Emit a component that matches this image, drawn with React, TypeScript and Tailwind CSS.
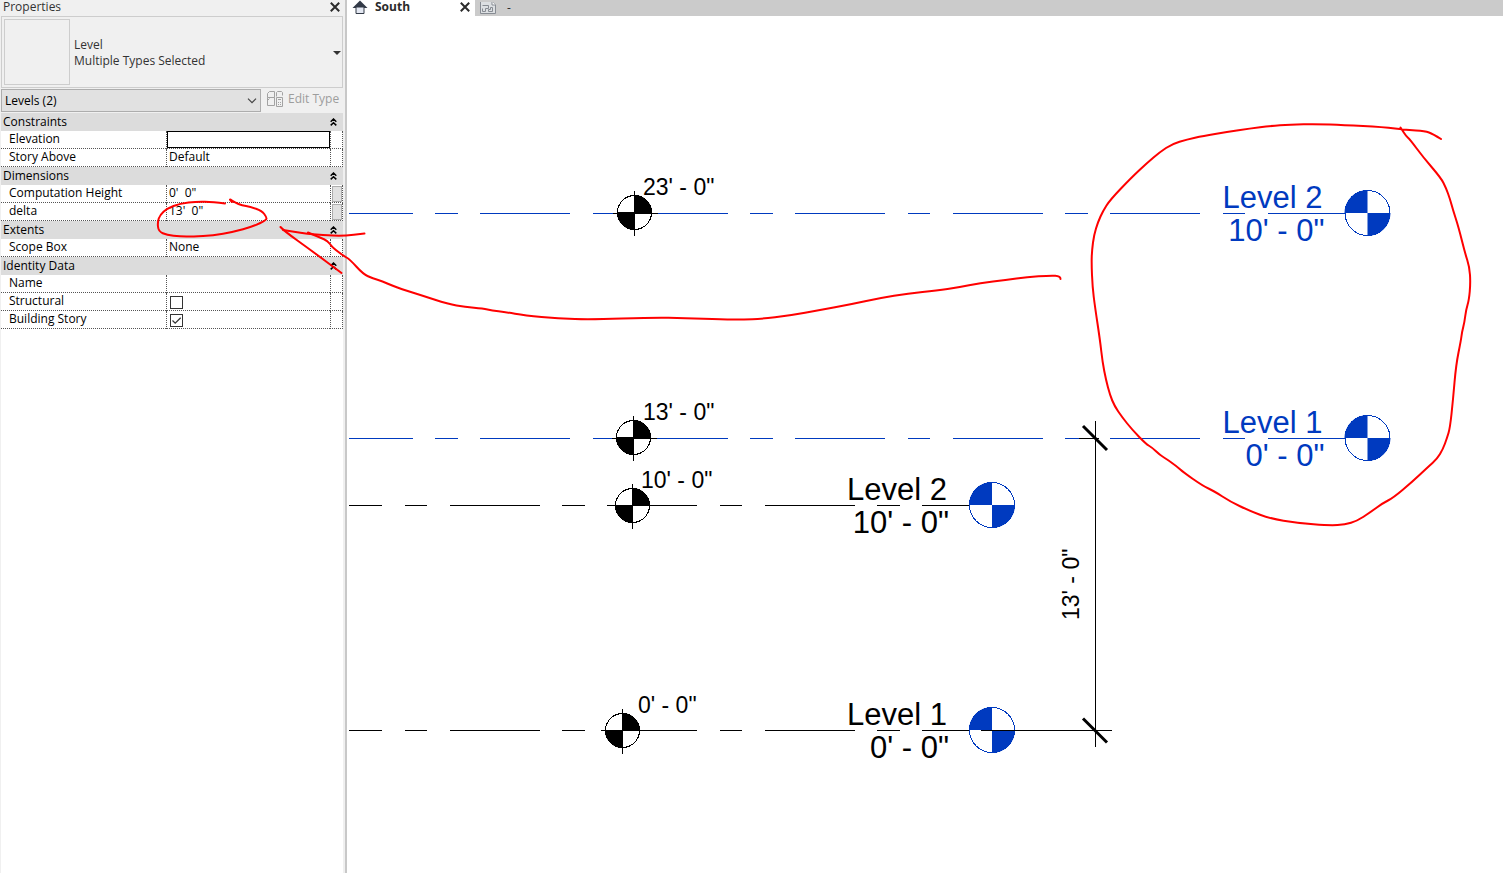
import { useState } from "react";

type Row = {
  id: string;
  label: string;
  kind: "text" | "box" | "check";
  value?: string;
  checked?: boolean;
  browse?: boolean;
};

const groups: { title: string; rows: Row[] }[] = [
  {
    title: "Constraints",
    rows: [
      { id: "elevation", label: "Elevation", kind: "box" },
      { id: "story-above", label: "Story Above", kind: "text", value: "Default" },
    ],
  },
  {
    title: "Dimensions",
    rows: [
      { id: "computation-height", label: "Computation Height", kind: "text", value: "0'  0\"", browse: true },
      { id: "delta", label: "delta", kind: "text", value: "13'  0\"", browse: true },
    ],
  },
  {
    title: "Extents",
    rows: [{ id: "scope-box", label: "Scope Box", kind: "text", value: "None" }],
  },
  {
    title: "Identity Data",
    rows: [
      { id: "name", label: "Name", kind: "text", value: "" },
      { id: "structural", label: "Structural", kind: "check", checked: false },
      { id: "building-story", label: "Building Story", kind: "check", checked: true },
    ],
  },
];

const BLUE = "#003abf";

const CloseIcon = () => (
  <svg width="10" height="10" viewBox="0 0 10 10" stroke="#2b2b2b" strokeWidth="2" fill="none">
    <path d="M0.8 0.8 9.2 9.2M9.2 0.8 0.8 9.2" />
  </svg>
);

const HomeIcon = () => (
  <svg width="16" height="14" viewBox="0 0 16 14">
    <path d="M0.5 8 8 0.500l7.500 7.500z" fill="#323a47" />
    <path d="M4 7h8V13.500H4z" fill="#e4e8f2" stroke="#323a47" />
  </svg>
);

const SheetIcon = () => (
  <svg width="16" height="12" viewBox="0 0 16 12" fill="none" stroke="#868b92">
    <path d="M0.500 -0.500H12L15.500 3V11.500H0.500z" fill="#dcdfe2" />
    <path d="M12 -0.500V3h3.500" fill="#fff" />
    <path d="M2.500 3.500H8.500V6.500H5.500V9.500H2.500V6.500M8.500 9.500V7.500H10.500V5.500H12.500V9.500z" />
  </svg>
);

const EditTypeIcon = () => (
  <svg width="17" height="17" viewBox="0 0 17 17" fill="none" stroke="#a2a2a2">
    <path d="M0.500 3.500 2.500 1.500H7.500V7.500H0.500zM0.500 10.500 2.500 8.500M0.500 7.500V15.500H7.500V7.500M9.500 6.500V2.500L10.500 1.500H14.500L15.500 2.500V5.500" />
    <path d="M9.500 7.500H15.500V16.500H9.500z" fill="#f0f0f0" />
    <path d="M11 9.500H14M11 12.500H12M13 12.500H14M11 14.500H12M13 14.500H14" />
  </svg>
);

const Chevrons = () => (
  <svg width="7" height="8" viewBox="0 0 7 8" fill="none" stroke="#000" strokeWidth="1.5">
    <path d="M0.700 3.700 3.500 1 6.300 3.700M0.700 7.400 3.500 4.700 6.300 7.400" />
  </svg>
);

const PropertyValue = ({ row }: { row: Row }) => {
  const [checked, setChecked] = useState(!!row.checked);

  if (row.kind === "check") {
    return (
      <span className="grid h-4 w-4 grid-cols-1 items-end pl-[3px]">
        <input
          id={row.id}
          type="checkbox"
          checked={checked}
          onChange={() => setChecked(!checked)}
          className="col-start-1 row-start-1 block size-[13px] appearance-none border border-[#333] bg-white"
        />
        {checked && (
          <svg width="13" height="13" viewBox="0 0 13 13" className="pointer-events-none col-start-1 row-start-1">
            <path d="M2.500 6.500 5.200 9.200 10.700 3.700" fill="none" stroke="#333" strokeWidth="1.300" />
          </svg>
        )}
      </span>
    );
  }
  if (row.kind === "box") {
    return <input id={row.id} type="text" className="block h-[17px] w-full border border-black bg-white px-0.5" />;
  }
  return (
    <input id={row.id} type="text" defaultValue={row.value} className="block h-[17px] w-full bg-white px-0.5 pb-0.5 whitespace-pre" />
  );
};

const PropertiesPanel = () => (
  <aside className="flex w-[347px] shrink-0 flex-col border-r-2 border-[#c8c8c8] bg-[#f0f0f0] pr-0.5 pl-px font-['Segoe_UI','Open_Sans',sans-serif] text-xs text-black">
    <header className="flex h-4 items-center justify-between pr-[3px] pb-0.5 pl-0.5">
      <h1 className="leading-[14px] text-[#333]">Properties</h1>
      <button type="button" aria-label="Close properties">
        <CloseIcon />
      </button>
    </header>

    <button type="button" className="flex h-[72px] items-center border border-[#cdcdcd] pr-px pl-0.5 text-left text-[#333]">
      <span className="size-[66px] border border-[#cdcdcd]" />
      <span className="flex-1 pt-0.5 pl-1 leading-4">
        Level
        <br />
        Multiple Types Selected
      </span>
      <svg width="8" height="4" viewBox="0 0 8 4" className="mt-0.5">
        <path d="M0 0h8L4 4z" fill="#333" />
      </svg>
    </button>

    <div className="flex h-[25px] items-center">
      <div className="grid w-[260px] items-center">
        <select
          aria-label="Filter"
          className="col-start-1 row-start-1 h-[23px] appearance-none border border-[#adadad] bg-[#e1e1e1] pl-[3px]"
        >
          <option>Levels (2)</option>
        </select>
        <svg width="10" height="6" viewBox="0 0 10 6" className="pointer-events-none col-start-1 row-start-1 mr-1 justify-self-end">
          <path d="M1 0.700 5 4.700 9 0.700" fill="none" stroke="#444" strokeWidth="1.200" />
        </svg>
      </div>
      <button type="button" disabled className="flex items-center gap-1 pb-1 pl-1.5 leading-4 text-[#9d9d9d]">
        <EditTypeIcon />
        Edit Type
      </button>
    </div>

    <div className="flex-1 bg-white">
      <table className="w-full table-fixed border-separate border-spacing-0">
        <colgroup>
          <col className="w-[165px]" />
          <col />
          <col className="w-[13px]" />
        </colgroup>
        {groups.map((group) => (
          <tbody key={group.title}>
            <tr>
              <th colSpan={3} className="h-[18px] bg-[#dcdcdc] p-0 font-normal">
                <button type="button" className="flex h-[18px] w-full items-center justify-between pr-1.5 pl-0.5 leading-[18px]">
                  {group.title}
                  <Chevrons />
                </button>
              </th>
            </tr>
            {group.rows.map((row) => (
              <tr key={row.id}>
                <th scope="row" className="h-[18px] border-b border-dotted border-[#555] p-0 pl-2 text-left font-normal">
                  <label htmlFor={row.id} className="block h-[17px] leading-[15px]">
                    {row.label}
                  </label>
                </th>
                <td className="h-[18px] border-b border-l border-dotted border-[#555] p-0 align-top">
                  <PropertyValue row={row} />
                </td>
                <td className="h-[18px] border-x border-b border-dotted border-[#555] p-0">
                  {row.browse && (
                    <button
                      type="button"
                      aria-label={`Associate ${row.label}`}
                      className="ml-px block h-4 w-2.5 border border-[#adadad] bg-[#e1e1e1]"
                    />
                  )}
                </td>
              </tr>
            ))}
          </tbody>
        ))}
      </table>
    </div>
  </aside>
);

// Spot elevation target, filled upper right and lower left
const SpotElevation = ({ x, y, cy, text, tx, ty }: { x: number; y: number; cy: number; text: string; tx: number; ty: number }) => (
  <g>
    <circle cx={x} cy={cy} r="17" fill="#fff" stroke="#000" shapeRendering="crispEdges" />
    <path d={`M${x} ${cy}V${cy - 17}A17 17 0 0 1 ${x + 17} ${cy}H${x - 17}A17 17 0 0 0 ${x} ${cy + 17}z`} fill="#000" stroke="#000" />
    <path d={`M${x} ${cy - 22}V${cy + 23}M${x - 22} ${y}H${x + 23}`} stroke="#000" shapeRendering="crispEdges" />
    <text x={tx} y={ty} fontSize="23">
      {text}
    </text>
  </g>
);

type HeadProps = { x: number; y: number; name: string; elevation: string; color: string };

// Level head with its name above the line and the elevation below
const LevelHead = ({ x, y, name, elevation, color }: HeadProps) => (
  <g>
    <text x={x - 145} y={y - 5} fontSize="31" fill={color}>
      {name}
    </text>
    <text x={x - 43} y={y + 28} fontSize="31" fill={color} textAnchor="end">
      {elevation}
    </text>
    <circle cx={x} cy={y} r="22.500" fill="#fff" stroke={BLUE} shapeRendering="crispEdges" />
    <path d={`M${x} ${y}V${y - 23}A23 23 0 0 0 ${x - 23} ${y}H${x + 23}A23 23 0 0 1 ${x} ${y + 23}z`} fill={BLUE} />
  </g>
);

const LevelLine = ({ y, end, offset, color }: { y: number; end: number; offset: number; color: string }) => (
  <path
    d={`M349 ${y}H${end}`}
    stroke={color}
    strokeDasharray="90 22.500 22.500 22.500"
    strokeDashoffset={offset}
    shapeRendering="crispEdges"
  />
);

const ElevationView = () => (
  <div className="relative flex-1 overflow-hidden bg-white">
    <svg className="absolute inset-0 size-full font-['Arial','Liberation_Sans',sans-serif]">
      <g transform="translate(-347 -16)">
        <LevelLine y={213.5} end={1345} offset={26.5} color={BLUE} />
        <LevelLine y={438.5} end={1345} offset={26.5} color={BLUE} />
        <LevelLine y={505.5} end={969} offset={57} color="#000" />
        <LevelLine y={730.5} end={969} offset={57} color="#000" />

        <SpotElevation x={634.5} y={213.5} cy={212.5} text={"23' - 0\""} tx={643} ty={195} />
        <SpotElevation x={633.5} y={438.5} cy={437.5} text={"13' - 0\""} tx={643} ty={420} />
        <SpotElevation x={632.5} y={505.5} cy={505.5} text={"10' - 0\""} tx={641} ty={488} />
        <SpotElevation x={622.5} y={730.5} cy={730.5} text={"0' - 0\""} tx={638} ty={713} />

        <LevelHead x={1367.5} y={213} name="Level 2" elevation={"10' - 0\""} color={BLUE} />
        <LevelHead x={1367.5} y={438} name="Level 1" elevation={"0' - 0\""} color={BLUE} />
        <LevelHead x={992} y={505} name="Level 2" elevation={"10' - 0\""} color="#000" />
        <LevelHead x={992} y={730} name="Level 1" elevation={"0' - 0\""} color="#000" />

        <path d="M1095.500 421V747M1079 438.500H1099M981 730.500H1112" stroke="#000" shapeRendering="crispEdges" />
        <path d="M1083 426 1107 450M1083 718.500 1107 742.500" stroke="#000" strokeWidth="3" />
        <text transform="translate(1079 620) rotate(-90)" fontSize="23">
          {"13' - 0\""}
        </text>
      </g>
    </svg>
  </div>
);

// Hand-drawn pen marks over the whole window
const strokes = [
  "1441,139 1433,134 1425,131 1407,130 1383,127 1343,125 1317,124 1290,124.500 1270,126 1250,128.500 1227,132 1203,136 1187,139.500 1172,144 1160,152 1147,163 1131,178 1110,200 1103,211 1098,222 1094,235 1092,250 1091.500,263 1092.500,287 1095,307 1100,340 1102.500,362 1106,380 1110,395 1114.500,406 1122,417 1132,429.500 1146,444 1152,447.500 1160,455 1165,458 1177,466.500 1183,472 1203,486 1214,491 1230,501.500 1250,511 1270,518.500 1297,523 1330,525.500 1345,524.500 1357,521 1370,512.500 1383,503 1393,498 1412,482 1428,467 1437,459 1443,449 1447,438 1450,428 1453,400 1456,365 1461,340 1462,332 1464.500,322 1466,310 1469,300 1470.500,283 1469.500,267 1465,253 1458.500,227 1453,210 1450,199 1446,188 1441,178 1423,157 1410,139.500 1406,136 1400.500,127.500",
  "1060.500,279 1060.500,276 1050,275.500 1027,277 1006,280 980,283 958,287.500 937,290.500 908,293.500 880,298 850,304.500 820,310 790,315.500 760,319 745,319.500 722,319.500 685,318 652,317.500 592,319.500 558,318.500 525,315.500 505,312 492,310.500 483,308.500 465,307 448,304 422,295.500 395,287 382,281 373,278.500 363,274 350,259.500 343,255.500 332,247 328,241 320,237.500 308,232.500",
  "280.500,227 283.500,230.500 312,251 341.500,273",
  "283,230 303,233.500 323,235 343,236 364.500,233.500",
  "225,203.500 213,202 197,201.500 180,203.500 167,208.500 160,215 157.500,222 158.500,231.500 167,235 180,236.500 193,236.500 213,235.500 233,232 253,226.500 266.500,220 266.500,217 262,211 250,206.500 242,205.500 235,202.500 229,198.500 232,202",
];

// Rounds the corners of a stroke by curving between segment midpoints
const smooth = (points: string) => {
  const p = points.split(" ").map((pair) => pair.split(",").map(Number));
  let d = `M${p[0][0]} ${p[0][1]}`;
  for (let i = 1; i < p.length - 1; i++) {
    d += `Q${p[i][0]} ${p[i][1]} ${(p[i][0] + p[i + 1][0]) / 2} ${(p[i][1] + p[i + 1][1]) / 2}`;
  }
  const last = p[p.length - 1];
  return `${d}L${last[0]} ${last[1]}`;
};

const PenMarks = () => (
  <svg className="pointer-events-none absolute inset-0 size-full" fill="none" stroke="#f00" strokeWidth="2" strokeLinecap="round" strokeLinejoin="round">
    {strokes.map((points, i) => (
      <path key={i} d={smooth(points)} />
    ))}
  </svg>
);

export default function App() {
  return (
    <div className="relative flex min-h-screen overflow-hidden bg-white">
      <PropertiesPanel />
      <main className="flex min-w-0 flex-1 flex-col">
        <nav className="flex h-4 bg-[#cbcbcb] font-['Segoe_UI','Open_Sans',sans-serif] text-xs leading-[14px] text-[#2b2b2b]">
          <div className="flex w-32 items-center bg-white pr-[5px] pb-0.5 pl-[5px]">
            <HomeIcon />
            <button type="button" className="flex-1 pl-[7px] text-left font-bold">
              South
            </button>
            <button type="button" aria-label="Close South">
              <CloseIcon />
            </button>
          </div>
          <button type="button" className="flex items-center gap-[11px] pl-[5px]">
            <SheetIcon />
            <span className="leading-4">-</span>
          </button>
        </nav>
        <ElevationView />
      </main>
      <PenMarks />
    </div>
  );
}
